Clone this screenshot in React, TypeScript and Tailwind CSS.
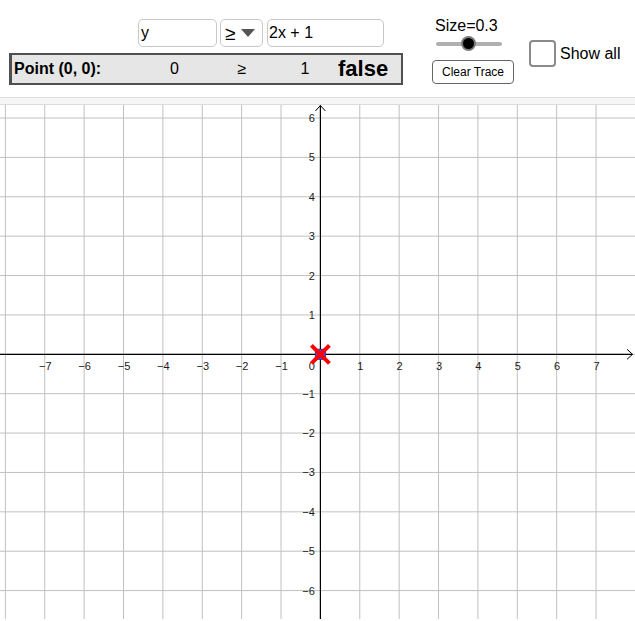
import React from "react";

const S = 39.38;
const OX = 320.4;
const OY = 249.3; // svg coords (page y - 105)
const W = 635;
const H = 514;

function Graph() {
  const xs: number[] = [];
  for (let k = -8; k <= 8; k++) {
    const x = OX + k * S;
    if (x > 0 && x < W) xs.push(k);
  }
  const ys: number[] = [];
  for (let k = -7; k <= 7; k++) {
    const y = OY - k * S;
    if (y > 0 && y < H) ys.push(k);
  }
  return (
    <svg width={W} height={H} className="block">
      {xs.map((k) => (
        <line key={"vx" + k} x1={OX + k * S} x2={OX + k * S} y1={0} y2={H} stroke="#c0c0c0" strokeWidth={1} />
      ))}
      {ys.map((k) => (
        <line key={"hy" + k} x1={0} x2={W} y1={OY - k * S} y2={OY - k * S} stroke="#c0c0c0" strokeWidth={1} />
      ))}
      {/* axes */}
      <line x1={0} x2={632.5} y1={OY} y2={OY} stroke="#000" strokeWidth={1.2} />
      <polyline points={`${627},${OY - 5} ${632.5},${OY} ${627},${OY + 5}`} fill="none" stroke="#000" strokeWidth={1} />
      <line x1={OX} x2={OX} y1={0.5} y2={H} stroke="#000" strokeWidth={1.2} />
      <polyline points={`${OX - 5},${6} ${OX},${0.5} ${OX + 5},${6}`} fill="none" stroke="#000" strokeWidth={1} />
      {/* x labels */}
      {xs
        .filter((k) => k !== 0 && k > -8 && k < 8)
        .map((k) => (
          <text
            key={"lx" + k}
            x={OX + k * S + 0.5}
            y={OY + 16}
            textAnchor="middle"
            fontSize={11}
            fontFamily="'Liberation Sans', Arial, sans-serif"
            fill="#1a1a1a"
          >
            {k < 0 ? "\u2212" + -k : String(k)}
          </text>
        ))}
      {/* y labels */}
      {ys
        .filter((k) => k !== 0)
        .map((k) => (
          <text
            key={"ly" + k}
            x={OX - 5.5}
            y={OY - k * S + 4}
            textAnchor="end"
            fontSize={11}
            fontFamily="'Liberation Sans', Arial, sans-serif"
            fill="#1a1a1a"
          >
            {k < 0 ? "\u2212" + -k : String(k)}
          </text>
        ))}
      <text x={OX - 5.5} y={OY + 16} textAnchor="end" fontSize={11} fontFamily="'Liberation Sans', Arial, sans-serif" fill="#1a1a1a">
        0
      </text>
      {/* point */}
      <rect x={OX - 5} y={OY - 5} width={10} height={10} fill="#4d4dff" stroke="#333399" strokeWidth={1} />
      <line x1={OX - 9} y1={OY - 9} x2={OX + 9} y2={OY + 9} stroke="#ff0000" strokeWidth={4} />
      <line x1={OX - 9} y1={OY + 9} x2={OX + 9} y2={OY - 9} stroke="#ff0000" strokeWidth={4} />
    </svg>
  );
}

export default function App() {
  return (
    <div className="w-[635px] h-[621px] bg-white overflow-hidden font-['Liberation_Sans',Arial,sans-serif] text-black">
      {/* header */}
      <div className="h-[97px] flex items-start">
        {/* left column */}
        <div className="ml-[9px] w-[394px] flex flex-col">
          <div className="pt-[19px] pl-[129px] flex">
            <div className="w-[79px] h-[28px] border border-[#c8c8c8] rounded-[5px] flex items-center pl-[2px] text-[16px] leading-none">
              y
            </div>
            <div className="ml-[3px] w-[43px] h-[28px] border border-[#c8c8c8] rounded-[5px] flex items-center pl-[4px] text-[19px] leading-none">
              <span>≥</span>
              <svg width="14" height="8" className="ml-[6px]" viewBox="0 0 14 8">
                <polygon points="0,0 14,0 7,8" fill="#555" />
              </svg>
            </div>
            <div className="ml-[4px] w-[117px] h-[28px] border border-[#c8c8c8] rounded-[5px] flex items-center pl-[1px] text-[16px] leading-none">
              2x + 1
            </div>
          </div>
          <div className="mt-[6px] h-[32px] bg-[#e6e6e6] border-2 border-l-[3px] border-[#505050] flex items-center">
            <div className="w-[127px] pl-[2px] font-bold text-[16px] leading-none">Point (0, 0):</div>
            <div className="w-[71px] text-center text-[16px] leading-none">0</div>
            <div className="w-[64px] text-center text-[16px] leading-none">≥</div>
            <div className="w-[62px] text-center text-[16px] leading-none">1</div>
            <div className="pl-[2px] font-bold text-[22px] leading-none">false</div>
          </div>
        </div>
        {/* middle column */}
        <div className="ml-[29px] w-[83px] flex flex-col">
          <div className="mt-[17px] pl-[3px] text-[16px] leading-[18px]">Size=0.3</div>
          <div className="relative h-[16px] mt-[1px]">
            <div className="absolute left-[4px] top-[6px] w-[66px] h-[4px] rounded-full bg-[#b0b0b0]" />
            <div className="absolute left-[29px] top-[0px] w-[15px] h-[15px] rounded-full bg-[#7a7a7a] flex items-center justify-center">
              <div className="w-[11px] h-[11px] rounded-full bg-black" />
            </div>
          </div>
          <button className="mt-[8px] h-[24px] w-[82px] border-[1.5px] border-[#666] rounded-[4px] bg-white text-[12px] leading-none text-black flex items-center justify-center">
            Clear Trace
          </button>
        </div>
        {/* right */}
        <div className="ml-[14px] mt-[40px] flex items-center">
          <div className="w-[27px] h-[27px] border-2 border-[#8a8a8a] rounded-[4px] bg-white" />
          <span className="ml-[4px] text-[16px] leading-none">Show all</span>
        </div>
      </div>
      {/* band */}
      <div className="h-[8px] bg-[#f5f5f5] border-y border-[#dcdcdc]" />
      <Graph />
    </div>
  );
}
